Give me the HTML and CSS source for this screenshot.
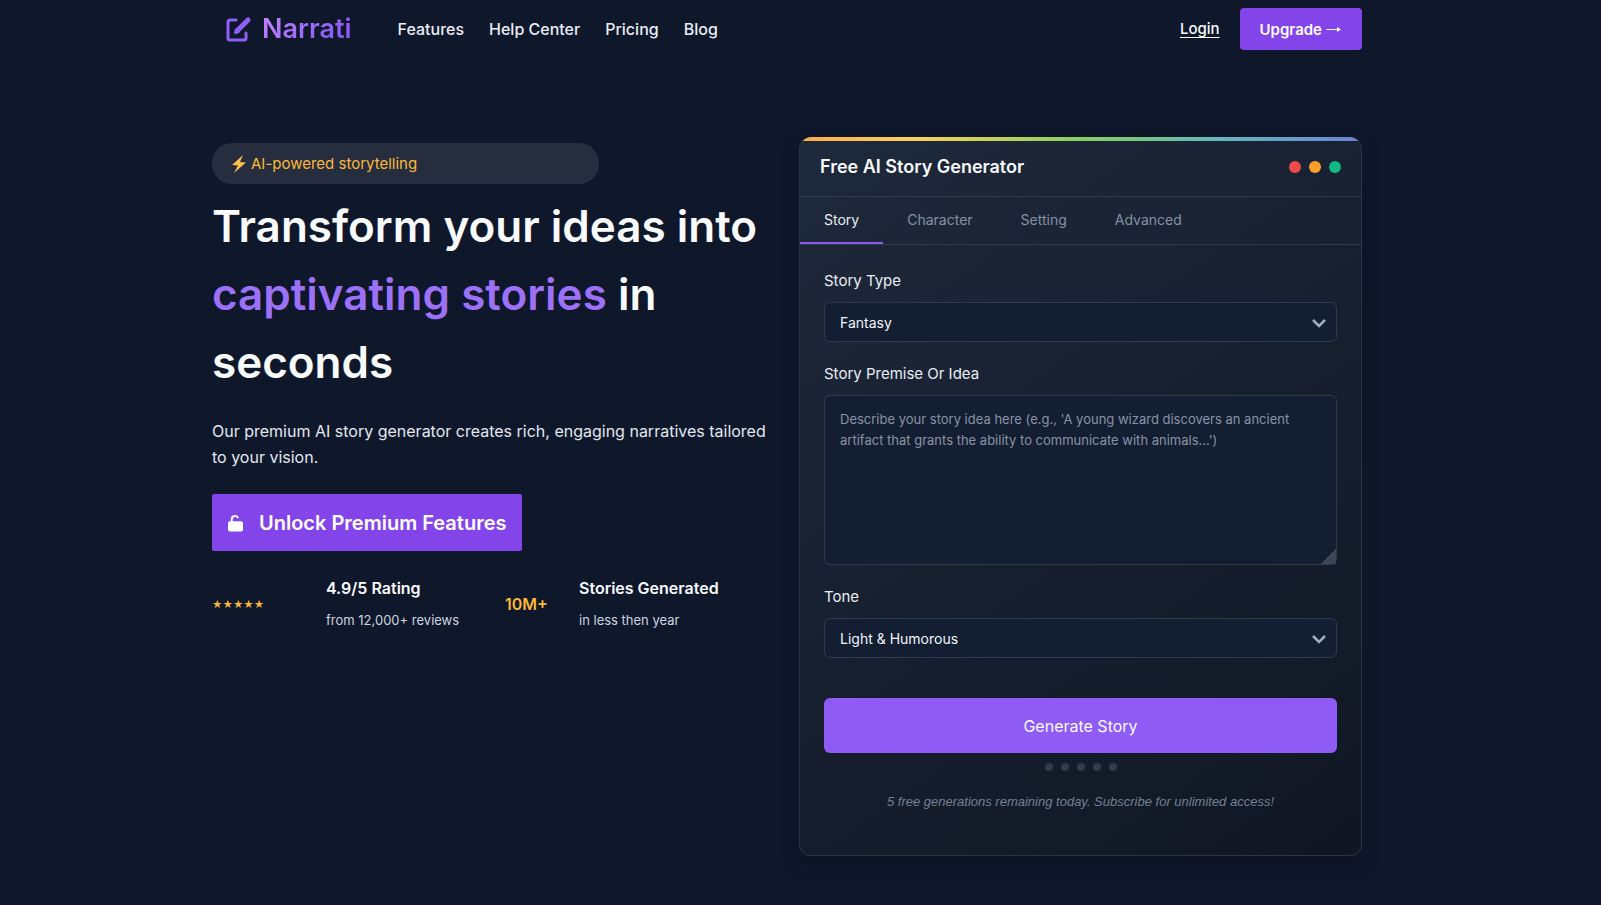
FILE: index.html
```html
<!DOCTYPE html>
<html lang="en">
<head>
  <meta charset="UTF-8">
  <meta name="viewport" content="width=device-width, initial-scale=1.0">
  <title>Narrati - AI Story Generator</title>
  <link rel="stylesheet" href="styles.css">
</head>

<body>
  <div class="container">
    <header class="navbar">
      <a class="logo" href="#">
        <svg class="logo-icon" viewBox="0 0 26 26" fill="none" stroke="#8f5ff8" stroke-width="3" stroke-linecap="round" stroke-linejoin="round">
          <path d="M10 4H4a2 2 0 0 0-2 2v16a2 2 0 0 0 2 2h14a2 2 0 0 0 2-2v-5"/>
          <path d="M11.500 14.500L22 4" stroke-width="5"/>
          <path d="M9.500 16.500l1-3 2 2z"/>
        </svg>
        <span class="logo-text">Narrati</span>
      </a>
      <nav class="nav-links">
        <a href="#">Features</a>
        <a href="#">Help Center</a>
        <a href="#">Pricing</a>
        <a href="#">Blog</a>
      </nav>
      <div class="nav-actions">
        <a class="login" href="#">Login</a>
        <button class="upgrade" type="button">Upgrade <svg viewBox="0 0 16 10" width="16" height="10" fill="none" stroke="currentColor"><path d="M0 5.500h14"/><path d="M11 3l4 2.500-4 2.500z" fill="currentColor" stroke="none"/></svg></button>
      </div>
    </header>

    <main class="hero">
      <section class="hero-content">
        <div class="badge">
          <svg class="bolt" viewBox="0 0 16 18"><path d="M12 0L1 10l6 .500L3 18l12-10.500-6-.500z" fill="#fbbf4a"/></svg>
          AI-powered storytelling
        </div>
        <h1>Transform your ideas into <span class="highlight">captivating stories</span> in seconds</h1>
        <p class="subtitle">Our premium AI story generator creates rich, engaging narratives tailored to your vision.</p>
        <button class="unlock" type="button">
          <svg class="lock-icon" viewBox="0 0 16 18"><path d="M4 9V5a3.500 3.500 0 0 1 6.800-1.200" fill="none" stroke="#fff" stroke-width="2"/><rect x="0" y="7" width="16" height="11" rx="2" fill="#fff"/></svg>
          Unlock Premium Features
        </button>
        <div class="stats">
          <div class="stars">★★★★★</div>
          <div class="stat">
            <strong>4.9/5 Rating</strong>
            <span>from 12,000+ reviews</span>
          </div>
          <div class="count">10M+</div>
          <div class="stat">
            <strong>Stories Generated</strong>
            <span>in less then year</span>
          </div>
        </div>
      </section>

      <section class="card">
        <div class="card-header">
          <h2>Free AI Story Generator</h2>
          <div class="window-dots">
            <span class="red"></span>
            <span class="orange"></span>
            <span class="green"></span>
          </div>
        </div>
        <div class="tabs">
          <button class="tab active" type="button">Story</button>
          <button class="tab" type="button">Character</button>
          <button class="tab" type="button">Setting</button>
          <button class="tab" type="button">Advanced</button>
        </div>
        <form class="card-body">
          <div class="field">
            <label for="story-type">Story Type</label>
            <div class="select-wrap">
              <select id="story-type">
                <option>Fantasy</option>
                <option>Mystery</option>
                <option>Romance</option>
              </select>
              <svg class="chevron" viewBox="0 0 16 10"><path d="M2 2l6 6 6-6"/></svg>
            </div>
          </div>
          <div class="field">
            <label for="premise">Story Premise Or Idea</label>
            <textarea id="premise" placeholder="Describe your story idea here (e.g., 'A young wizard discovers an ancient artifact that grants the ability to communicate with animals...')"></textarea>
          </div>
          <div class="field">
            <label for="tone">Tone</label>
            <div class="select-wrap">
              <select id="tone">
                <option>Light &amp; Humorous</option>
                <option>Dark &amp; Serious</option>
              </select>
              <svg class="chevron" viewBox="0 0 16 10"><path d="M2 2l6 6 6-6"/></svg>
            </div>
          </div>
          <button class="generate" type="button">Generate Story</button>
          <div class="usage-dots">
            <span></span><span></span><span></span><span></span><span></span>
          </div>
          <p class="note">5 free generations remaining today. Subscribe for unlimited access!</p>
        </form>
      </section>
    </main>
  </div>
</body>
</html>
```
FILE: styles.css
```css
* {
  box-sizing: border-box;
}

body {
  margin: 0;
  padding: 0 51px 0 24px;
  background-color: #0f172a;
  color: #f8fafc;
  font-family: Inter, sans-serif;
  font-size: 16px;
  line-height: 26px;
}

button,
select,
textarea {
  font-family: inherit;
}

.container {
  max-width: 1150px;
  margin: 0 auto;
}

.navbar {
  display: flex;
  align-items: center;
  height: 58px;
  padding-left: 14px;
}

.logo {
  display: flex;
  align-items: center;
  gap: 10px;
  text-decoration: none;
}

.logo-icon {
  width: 26px;
  height: 26px;
}

.logo-text {
  font-size: 27px;
  font-weight: 600;
  background: linear-gradient(135deg, #c084fc, #8b5cf6 80%);
  -webkit-background-clip: text;
  background-clip: text;
  color: transparent;
}

.nav-links {
  display: flex;
  gap: 25px;
  margin-left: 46px;
}

.nav-links a {
  color: #e8edf5;
  font-weight: 500;
  text-decoration: none;
}

.nav-actions {
  display: flex;
  align-items: center;
  gap: 20px;
  margin-left: auto;
}

.login {
  color: #f8fafc;
  font-weight: 500;
  font-size: 15px;
  text-underline-offset: 3px;
}

.upgrade {
  display: flex;
  align-items: center;
  gap: 4px;
  height: 42px;
  padding: 0 20px;
  background-color: #8344ea;
  color: #fff;
  border: none;
  border-radius: 4px;
  font-size: 15px;
  font-weight: 600;
  cursor: pointer;
}

.hero {
  display: grid;
  grid-template-columns: 1fr 1fr;
  gap: 24px;
  margin-top: 79px;
  padding-bottom: 48px;
}

.hero-content {
  padding-top: 6px;
}

.badge {
  display: flex;
  align-items: center;
  gap: 4px;
  max-width: 387px;
  height: 41px;
  padding: 0 19px;
  background-color: #252d3e;
  border-radius: 20px;
  color: #fbb83a;
  font-size: 15px;
}

.bolt {
  width: 16px;
  height: 18px;
}

h1 {
  margin: 8px 0 22px;
  font-size: 44px;
  font-weight: 600;
  line-height: 68px;
}

.highlight {
  color: #9d70f8;
}

.subtitle {
  margin: 0 0 24px;
  color: #e2e8f0;
}

.unlock {
  display: flex;
  align-items: center;
  gap: 16px;
  height: 57px;
  padding: 0 16px;
  background-color: #8344ea;
  color: #fff;
  border: none;
  border-radius: 2px;
  font-size: 20px;
  font-weight: 600;
  cursor: pointer;
}

.lock-icon {
  width: 15px;
  height: 18px;
}

.stats {
  display: grid;
  grid-template-columns: 114px 179px 74px auto;
  align-items: center;
  margin-top: 24px;
}

.stars {
  color: #fbb83a;
  font-size: 10px;
}

.count {
  color: #fbb83a;
  font-weight: 600;
}

.stat {
  display: flex;
  flex-direction: column;
  gap: 6px;
}

.stat strong {
  font-weight: 600;
}

.stat span {
  color: #cbd5e1;
  font-size: 13px;
}

.card {
  position: relative;
  overflow: hidden;
  border: 1px solid #2a3444;
  border-top: none;
  border-radius: 12px;
  background: linear-gradient(145deg, #1e293b, #101623);
  box-shadow: 0 8px 20px rgba(0, 0, 0, 0.2);
}

.card::before {
  content: "";
  position: absolute;
  top: 0;
  left: 0;
  right: 0;
  height: 4px;
  background: linear-gradient(90deg, #fba94c, #fcd05c 20%, #85cf60 50%, #63b7bd 75%, #6b83d6);
}

.card-header {
  display: flex;
  align-items: center;
  justify-content: space-between;
  padding: 17px 20px 16px;
  border-bottom: 1px solid #303a4a;
}

.card-header h2 {
  margin: 0;
  font-size: 18px;
  font-weight: 600;
}

.window-dots {
  display: flex;
  gap: 8px;
}

.window-dots span {
  width: 12px;
  height: 12px;
  border-radius: 50%;
}

.red {
  background-color: #ef4a4a;
}

.orange {
  background-color: #f9a02a;
}

.green {
  background-color: #10b981;
}

.tabs {
  display: flex;
  height: 48px;
  border-bottom: 1px solid #303a4a;
}

.tab {
  padding: 0 24px;
  background: none;
  border: none;
  border-bottom: 2px solid transparent;
  color: #8791a3;
  font-size: 14px;
  cursor: pointer;
}

.tab.active {
  color: #e8edf5;
  border-bottom-color: #8b5cf6;
}

.card-body {
  padding: 24px 24px 40px;
}

.field {
  margin-bottom: 20px;
}

.field label {
  display: block;
  margin-bottom: 9px;
  color: #e8edf5;
  font-size: 15px;
  line-height: 24px;
}

.select-wrap {
  position: relative;
}

select,
textarea {
  display: block;
  width: 100%;
  padding: 0 15px;
  background-color: #141e32;
  border: 1px solid #303a4c;
  border-radius: 6px;
  color: #f1f5f9;
  font-size: 14px;
}

select {
  appearance: none;
  height: 40px;
}

textarea {
  height: 170px;
  padding-top: 13px;
  font-size: 13px;
  line-height: 21px;
  resize: vertical;
}

textarea::placeholder {
  color: #8893a6;
}

textarea::-webkit-resizer {
  background: linear-gradient(135deg, transparent 50%, #3c4656 50%);
}

.chevron {
  position: absolute;
  right: 10px;
  top: 16px;
  width: 16px;
  height: 10px;
  fill: none;
  stroke: #a3adbd;
  stroke-width: 2.500;
  pointer-events: none;
}

.generate {
  display: block;
  width: 100%;
  height: 55px;
  margin-top: 40px;
  background-color: #8f5bf5;
  color: #f8fafc;
  border: none;
  border-radius: 6px;
  font-size: 16px;
  cursor: pointer;
}

.usage-dots {
  display: flex;
  justify-content: center;
  gap: 8px;
  margin-top: 10px;
}

.usage-dots span {
  width: 8px;
  height: 8px;
  border-radius: 50%;
  background-color: #313a49;
}

.note {
  margin: 18px 0 0;
  color: #748093;
  font-family: "Liberation Sans", sans-serif;
  font-size: 13px;
  font-style: italic;
  text-align: center;
}
```
